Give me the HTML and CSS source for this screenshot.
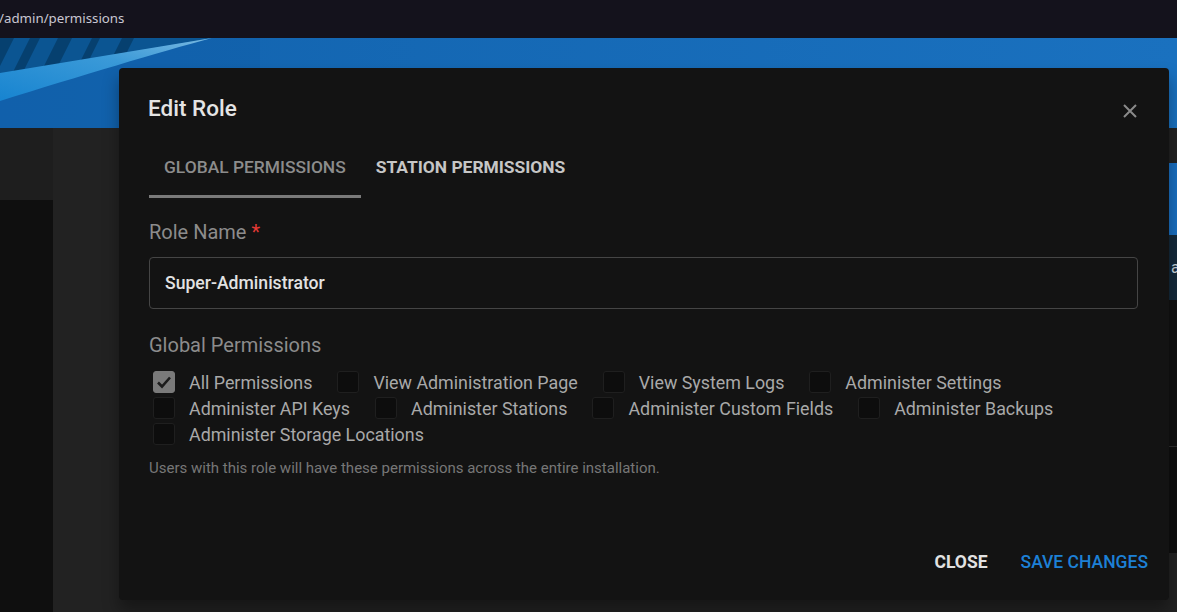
FILE: index.html
```html
<!DOCTYPE html>
<html lang="en">
<head>
<meta charset="utf-8">
<title>Edit Role</title>
<link rel="stylesheet" href="styles.css">
</head>
<body>
<div class="urlbar"><span class="url">/admin/permissions</span></div>
<header class="appbar">
  <svg class="appbar-art" width="1177" height="90" viewBox="0 0 1177 90" aria-hidden="true">
    <defs>
      <linearGradient id="bg" x1="0" y1="0" x2="1" y2="0">
        <stop offset="0" stop-color="#1263ae"/>
        <stop offset="1" stop-color="#1a71bf"/>
      </linearGradient>
      <linearGradient id="band" x1="0" y1="1" x2="1" y2="0">
        <stop offset="0" stop-color="#1784d0"/>
        <stop offset="0.6" stop-color="#3b9ad8"/>
        <stop offset="1" stop-color="#7ab9e0"/>
      </linearGradient>
      <clipPath id="tri"><polygon points="0,0 212,0 0,36"/></clipPath>
    </defs>
    <rect width="1177" height="90" fill="url(#bg)"/>
    <rect x="0" y="0" width="260" height="90" fill="#0f5ea8" opacity="0.5"/>
    <polygon points="0,0 212,0 0,36" fill="#0b5592"/>
    <g clip-path="url(#tri)" fill="#06406f">
      <polygon points="0,0 14,0 -6,40 -20,40"/>
      <polygon points="30,0 40,0 20,40 10,40"/>
      <polygon points="58,0 72,0 52,40 38,40"/>
      <polygon points="92,0 100,0 80,40 72,40"/>
      <polygon points="122,0 134,0 114,40 102,40"/>
    </g>
    <path d="M0,35 L212,0 C160,14 80,38 0,63 Z" fill="url(#band)"/>
  </svg>
</header>
<div class="layout">
  <aside class="sidebar">
    <div class="side-top"></div>
    <div class="side-body"></div>
  </aside>
  <main class="main">
    <section class="card">
      <div class="card-head"></div>
      <div class="card-sub"><span class="col-label">a</span></div>
      <div class="card-body"></div>
      <div class="card-row"></div>
    </section>
  </main>
</div>

<div class="dialog" role="dialog" aria-label="Edit Role">
  <div class="dialog-head">
    <h2 class="dialog-title">Edit Role</h2>
    <button class="close-btn" aria-label="Close">
      <svg width="14" height="14" viewBox="0 0 14 14"><path d="M1 1 L13 13 M13 1 L1 13" stroke="#8a8a8a" stroke-width="2" fill="none"/></svg>
    </button>
  </div>
  <div class="tabs">
    <div class="tab tab-active">GLOBAL PERMISSIONS</div>
    <div class="tab tab-other">STATION PERMISSIONS</div>
  </div>
  <div class="dialog-body">
    <div class="field-label">Role Name <span class="req">*</span></div>
    <div class="text-input">Super-Administrator</div>
    <div class="group-label">Global Permissions</div>
    <div class="checks">
      <label class="check"><span class="box box-on"><svg width="22" height="22" viewBox="0 0 22 22"><path d="M5 11.5 L9 15.5 L17 6.5" stroke="#1c1c1c" stroke-width="2.6" fill="none"/></svg></span><span class="check-text">All Permissions</span></label>
      <label class="check"><span class="box"></span><span class="check-text">View Administration Page</span></label>
      <label class="check"><span class="box"></span><span class="check-text">View System Logs</span></label>
      <label class="check"><span class="box"></span><span class="check-text">Administer Settings</span></label>
      <label class="check"><span class="box"></span><span class="check-text">Administer API Keys</span></label>
      <label class="check"><span class="box"></span><span class="check-text">Administer Stations</span></label>
      <label class="check"><span class="box"></span><span class="check-text">Administer Custom Fields</span></label>
      <label class="check"><span class="box"></span><span class="check-text">Administer Backups</span></label>
      <label class="check"><span class="box"></span><span class="check-text">Administer Storage Locations</span></label>
    </div>
    <div class="hint">Users with this role will have these permissions across the entire installation.</div>
  </div>
  <div class="actions">
    <button class="btn btn-close">CLOSE</button>
    <button class="btn btn-save">SAVE CHANGES</button>
  </div>
</div>
</body>
</html>
```
FILE: styles.css
```css
html, body {
  margin: 0;
  padding: 0;
}
body {
  width: 1177px;
  height: 612px;
  overflow: hidden;
  background: #222222;
  font-family: Roboto, "Liberation Sans", sans-serif;
  position: relative;
}
.urlbar {
  height: 38px;
  background: #14121c;
  display: flex;
  align-items: center;
}
.url {
  font-family: "Noto Sans", "Open Sans", sans-serif;
  font-size: 13.3px;
  color: #c9c7d2;
  margin-left: -1px;
  margin-top: -2px;
}
.appbar {
  height: 90px;
  overflow: hidden;
}
.appbar-art {
  display: block;
}
.layout {
  display: flex;
  height: 484px;
}
.sidebar {
  width: 53px;
  display: flex;
  flex-direction: column;
}
.side-top {
  height: 72px;
  background: #1e1e1e;
}
.side-body {
  flex: 1;
  background: #0f0f0f;
}
.main {
  flex: 1;
  background: #222222;
  padding: 35px 0 0 100px;
  overflow: hidden;
}
.card {
  width: 1024px;
  overflow: hidden;
}
.card-head {
  height: 72px;
  background: #1a6fc0;
}
.card-sub {
  height: 65px;
  background: #14293a;
  display: flex;
  align-items: center;
  padding-left: 1018px;
  white-space: nowrap;
}
.col-label {
  color: #c8d3dc;
  font-size: 16px;
}
.card-body {
  height: 146px;
  background: #111111;
  border-bottom: 1px solid #2e2e2e;
}
.card-row {
  height: 106px;
  background: #0f0f0f;
}

/* dialog */
.dialog {
  position: absolute;
  left: 119px;
  top: 68px;
  width: 1050px;
  height: 532px;
  box-sizing: border-box;
  background: #131313;
  border-radius: 4px;
  box-shadow: 0 10px 16px rgba(0, 0, 0, 0.35);
  padding: 20px 31px 20px 30px;
  display: flex;
  flex-direction: column;
}
.dialog-head {
  height: 40px;
  display: flex;
  align-items: center;
  justify-content: space-between;
}
.dialog-title {
  margin: 0 0 0 -1px;
  font-size: 22.5px;
  font-weight: 500;
  color: #e4e4e4;
  line-height: 40px;
}
.close-btn {
  background: none;
  border: none;
  padding: 0;
  margin: 6px 1px 0 0;
  width: 14px;
  height: 14px;
  display: flex;
}
.tabs {
  display: flex;
}
.tab {
  padding: 29px 15px 18px;
  line-height: 20px;
  font-size: 17.4px;
  font-weight: 500;
  border-bottom: 3px solid transparent;
}
.tab-active {
  color: #8c8c8c;
  border-bottom-color: #7a7a7a;
}
.tab-other {
  color: #c6c6c6;
  font-weight: 700;
}
.dialog-body {
  display: flex;
  flex-direction: column;
}
.field-label {
  margin-top: 22px;
  line-height: 24px;
  font-size: 20px;
  color: #8c8c8c;
}
.req {
  color: #e53935;
}
.text-input {
  margin-top: 13px;
  height: 52px;
  box-sizing: border-box;
  border: 1px solid #454545;
  border-radius: 4px;
  padding-left: 15px;
  display: flex;
  align-items: center;
  font-size: 17.6px;
  font-weight: 500;
  color: #e2e2e2;
}
.group-label {
  margin-top: 24px;
  line-height: 24px;
  font-size: 20px;
  color: #8c8c8c;
}
.checks {
  margin-top: 12px;
  display: flex;
  flex-wrap: wrap;
}
.check {
  height: 26px;
  display: flex;
  align-items: center;
  padding-left: 4px;
  margin-right: 21px;
  gap: 14px;
}
.box {
  width: 22px;
  height: 22px;
  box-sizing: border-box;
  border-radius: 3px;
  background: #0d0d0d;
  border: 1px solid #1f1f1f;
  display: flex;
}
.box-on {
  background: #7a7a7a;
  border-color: #7a7a7a;
}
.box-on svg {
  margin: -1px;
}
.check-text {
  font-size: 17.85px;
  color: #a9a9a9;
  white-space: nowrap;
}
.hint {
  margin-top: 12px;
  line-height: 18px;
  font-size: 15px;
  color: #777777;
}
.actions {
  margin-top: auto;
  display: flex;
  justify-content: flex-end;
  gap: 33px;
  margin-right: -10px;
}
.btn {
  background: none;
  border: none;
  padding: 0;
  font-family: Roboto, "Liberation Sans", sans-serif;
  font-size: 17.5px;
  line-height: 36px;
  font-weight: 500;
}
.btn-close {
  color: #e2e2e2;
  font-weight: 700;
}
.btn-save {
  color: #1d80d6;
}
```
